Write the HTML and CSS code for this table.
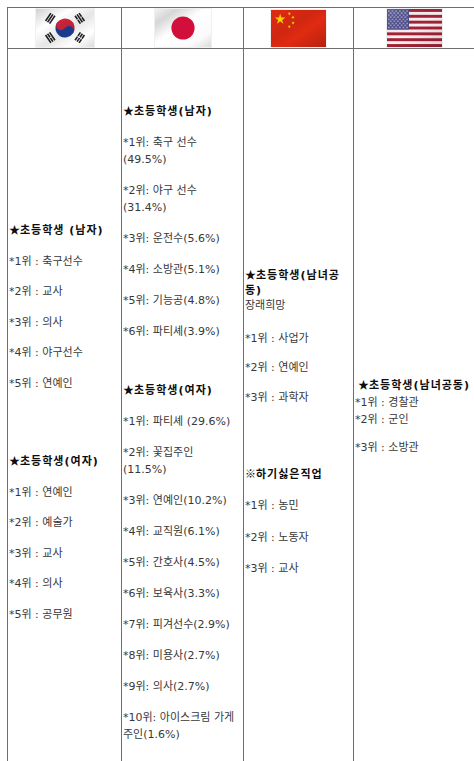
FILE: index.html
```html
<!DOCTYPE html>
<html lang="ko">
<head>
<meta charset="utf-8">
<title>나라별 초등학생 장래희망</title>
<link rel="stylesheet" href="styles.css">
</head>
<body>
<table class="jobs">
  <colgroup>
    <col class="c1"><col class="c2"><col class="c3"><col class="c4">
  </colgroup>
  <tr class="flags">
    <td>
      <svg class="flag kr" viewBox="-36 -24 72 48" preserveAspectRatio="none" aria-label="대한민국">
        <defs>
          <linearGradient id="krShade" x1="0" y1="0" x2="1" y2="1">
            <stop offset="0" stop-color="#000" stop-opacity="0.18"/>
            <stop offset="0.3" stop-color="#000" stop-opacity="0"/>
            <stop offset="0.55" stop-color="#000" stop-opacity="0.1"/>
            <stop offset="0.78" stop-color="#000" stop-opacity="0"/>
            <stop offset="1" stop-color="#000" stop-opacity="0.14"/>
          </linearGradient>
        </defs>
        <rect x="-36" y="-24" width="72" height="48" fill="#fff"/>
        <g transform="rotate(-56.3099325)">
          <g id="krb2">
            <path id="krb" d="M-6-26H6v2H-6zm0 3H6v2H-6zm0 3H6v2H-6z" fill="#222"/>
            <use href="#krb" y="44"/>
          </g>
          <path stroke="#fff" d="M0,17v10"/>
          <path fill="#d3243a" d="M0-12A12 12 0 0 1 0 12z"/>
          <path fill="#1c3f9a" d="M0-12A12 12 0 0 0 0 12 6 6 0 0 0 0 0z"/>
          <circle cy="-6" fill="#d3243a" r="6"/>
        </g>
        <g transform="rotate(-123.6900675)">
          <use href="#krb2"/>
          <path stroke="#fff" d="M0-23.5v3M0,17v3.5M0,23.5v3"/>
        </g>
        <rect x="-36" y="-24" width="72" height="48" fill="url(#krShade)"/>
      </svg>
    </td>
    <td>
      <svg class="flag jp" viewBox="0 0 56 38" preserveAspectRatio="none" aria-label="일본">
        <defs>
          <linearGradient id="jpShade" x1="0" y1="0" x2="1" y2="1">
            <stop offset="0" stop-color="#000" stop-opacity="0.05"/>
            <stop offset="0.2" stop-color="#000" stop-opacity="0.16"/>
            <stop offset="0.45" stop-color="#000" stop-opacity="0"/>
            <stop offset="0.8" stop-color="#000" stop-opacity="0.02"/>
            <stop offset="1" stop-color="#000" stop-opacity="0.14"/>
          </linearGradient>
        </defs>
        <rect width="56" height="38" fill="#fff"/>
        <rect width="56" height="38" fill="url(#jpShade)"/>
        <circle cx="28" cy="19" r="11.6" fill="#d20f3a"/>
      </svg>
    </td>
    <td>
      <svg class="flag cn" viewBox="0 0 30 20" preserveAspectRatio="none" aria-label="중국">
        <defs>
          <linearGradient id="cnShade" x1="0" y1="0" x2="1" y2="1">
            <stop offset="0" stop-color="#000" stop-opacity="0"/>
            <stop offset="0.4" stop-color="#000" stop-opacity="0.08"/>
            <stop offset="0.6" stop-color="#000" stop-opacity="0"/>
            <stop offset="1" stop-color="#000" stop-opacity="0.2"/>
          </linearGradient>
          <path id="cnStar" d="M0,-1 L0.2245,-0.309 L0.951,-0.309 L0.363,0.118 L0.588,0.809 L0,0.382 L-0.588,0.809 L-0.363,0.118 L-0.951,-0.309 L-0.2245,-0.309Z" fill="#f8d000"/>
        </defs>
        <rect width="30" height="20" fill="#e12a12"/>
        <rect width="30" height="20" fill="url(#cnShade)"/>
        <use href="#cnStar" transform="translate(5,5) scale(3)"/>
        <use href="#cnStar" transform="translate(10,2) rotate(-121)"/>
        <use href="#cnStar" transform="translate(12,4) rotate(-98)"/>
        <use href="#cnStar" transform="translate(12,7) rotate(-74)"/>
        <use href="#cnStar" transform="translate(10,9) rotate(-51)"/>
      </svg>
    </td>
    <td>
      <svg class="flag us" viewBox="0 0 190 100" preserveAspectRatio="none" aria-label="미국">
        <defs>
          <pattern id="usStars" patternUnits="userSpaceOnUse" width="12.667" height="10.77">
            <circle cx="6.333" cy="5.385" r="2" fill="#e8e8f2"/>
            <circle cx="0" cy="0" r="2" fill="#e8e8f2"/>
            <circle cx="12.667" cy="0" r="2" fill="#e8e8f2"/>
            <circle cx="0" cy="10.77" r="2" fill="#e8e8f2"/>
            <circle cx="12.667" cy="10.77" r="2" fill="#e8e8f2"/>
          </pattern>
          <linearGradient id="usShade" x1="0" y1="0" x2="1" y2="1">
            <stop offset="0" stop-color="#fff" stop-opacity="0.1"/>
            <stop offset="0.5" stop-color="#000" stop-opacity="0"/>
            <stop offset="1" stop-color="#000" stop-opacity="0.12"/>
          </linearGradient>
        </defs>
        <rect width="190" height="100" fill="#f6eef0"/>
        <g fill="#a22236">
          <rect y="0" width="190" height="7.69"/>
          <rect y="15.38" width="190" height="7.69"/>
          <rect y="30.77" width="190" height="7.69"/>
          <rect y="46.15" width="190" height="7.69"/>
          <rect y="61.54" width="190" height="7.69"/>
          <rect y="76.92" width="190" height="7.69"/>
          <rect y="92.31" width="190" height="7.69"/>
        </g>
        <rect width="76" height="53.85" fill="#4a4a8a"/>
        <rect x="3" y="2" width="70" height="50" fill="url(#usStars)"/>
        <rect width="190" height="100" fill="url(#usShade)"/>
      </svg>
    </td>
  </tr>
  <tr class="lists">
    <td>
      <div class="col col-kr">
        <p class="hd"><span class="sym">★</span>초등학생 (남자)</p>
        <p class="it">*1위 : 축구선수</p>
        <p class="it">*2위 : 교사</p>
        <p class="it">*3위 : 의사</p>
        <p class="it">*4위 : 야구선수</p>
        <p class="it">*5위 : 연예인</p>
        <p class="hd sec"><span class="sym">★</span>초등학생(여자)</p>
        <p class="it">*1위 : 연예인</p>
        <p class="it">*2위 : 예술가</p>
        <p class="it">*3위 : 교사</p>
        <p class="it">*4위 : 의사</p>
        <p class="it">*5위 : 공무원</p>
      </div>
    </td>
    <td>
      <div class="col col-jp">
        <p class="hd"><span class="sym">★</span>초등학생(남자)</p>
        <p class="it">*1위: 축구 선수<br>(49.5%)</p>
        <p class="it">*2위: 야구 선수<br>(31.4%)</p>
        <p class="it">*3위: 운전수(5.6%)</p>
        <p class="it">*4위: 소방관(5.1%)</p>
        <p class="it">*5위: 기능공(4.8%)</p>
        <p class="it">*6위: 파티셰(3.9%)</p>
        <p class="hd sec"><span class="sym">★</span>초등학생(여자)</p>
        <p class="it">*1위: 파티셰 (29.6%)</p>
        <p class="it">*2위: 꽃집주인<br>(11.5%)</p>
        <p class="it">*3위: 연예인(10.2%)</p>
        <p class="it">*4위: 교직원(6.1%)</p>
        <p class="it">*5위: 간호사(4.5%)</p>
        <p class="it">*6위: 보육사(3.3%)</p>
        <p class="it">*7위: 피겨선수(2.9%)</p>
        <p class="it">*8위: 미용사(2.7%)</p>
        <p class="it">*9위: 의사(2.7%)</p>
        <p class="it">*10위: 아이스크림 가게<br>주인(1.6%)</p>
      </div>
    </td>
    <td>
      <div class="col col-cn">
        <div class="intro">
          <p class="hd"><span class="sym">★</span>초등학생(남녀공<br>동)</p>
          <p>장래희망</p>
        </div>
        <p class="it first">*1위 : 사업가</p>
        <p class="it">*2위 : 연예인</p>
        <p class="it">*3위 : 과학자</p>
        <p class="hd sec"><span class="sym">※</span>하기싫은직업</p>
        <p class="it after">*1위 : 농민</p>
        <p class="it after">*2위 : 노동자</p>
        <p class="it after">*3위 : 교사</p>
      </div>
    </td>
    <td>
      <div class="col col-us">
        <p class="hd lead"><span class="sym">★</span>초등학생(남녀공동)</p>
        <p>*1위 : 경찰관</p>
        <p>*2위 : 군인</p>
        <p class="it">*3위 : 소방관</p>
      </div>
    </td>
  </tr>
</table>
</body>
</html>
```

FILE: styles.css
```css
html, body {
  background: #fff;
}

body {
  margin: 0;
  padding: 7px 0 0 7px;
  font-family: "DejaVu Sans", "Noto Sans CJK KR", sans-serif;
  font-size: 11px;
  color: #383838;
}

.jobs {
  border-collapse: collapse;
  table-layout: fixed;
  width: 467px;
}

.c1 { width: 114px; }
.c2 { width: 122px; }
.c3 { width: 110px; }
.c4 { width: 121px; }

.jobs td {
  border: 1px solid #6e6e6e;
  padding: 1px;
}

.flags td {
  height: 38px;
  text-align: center;
  vertical-align: middle;
  line-height: 0;
}

.flag {
  display: inline-block;
  height: 38px;
  box-shadow: 0 0 0 1px rgba(0, 0, 0, 0.06);
}

.flag.kr { width: 58px; }
.flag.jp { width: 56px; }
.flag.cn { width: 55px; height: 37px; }
.flag.us { width: 55px; }

.lists td {
  height: 744px;
  vertical-align: middle;
  text-align: left;
}

.col p {
  margin: 0;
  line-height: 17px;
}

.col .it {
  margin-top: 14px;
}

.col .hd {
  font-weight: bold;
  color: #0d0d0d;
  letter-spacing: 1px;
  white-space: nowrap;
}

.sym {
  font-family: "Noto Sans CJK KR", sans-serif;
  letter-spacing: 0;
}

/* Korea column */
.col-kr .it { margin-top: 13.5px; }
.col-kr .sec { margin-top: 60.5px; }

/* Japan column */
.col-jp .sec { margin-top: 41px; }

/* China column */
.col-cn .intro p { line-height: 15px; }
.col-cn .it { margin-top: 12.5px; }
.col-cn .it.first { margin-top: 16.5px; }
.col-cn .sec { margin-top: 59px; }
.col-cn .it.after { margin-top: 14.5px; }

/* USA column */
.col-us {
  padding-bottom: 12px;
}
.col-us .lead { padding-left: 3px; }
.col-us .it { margin-top: 11.3px; }
```
